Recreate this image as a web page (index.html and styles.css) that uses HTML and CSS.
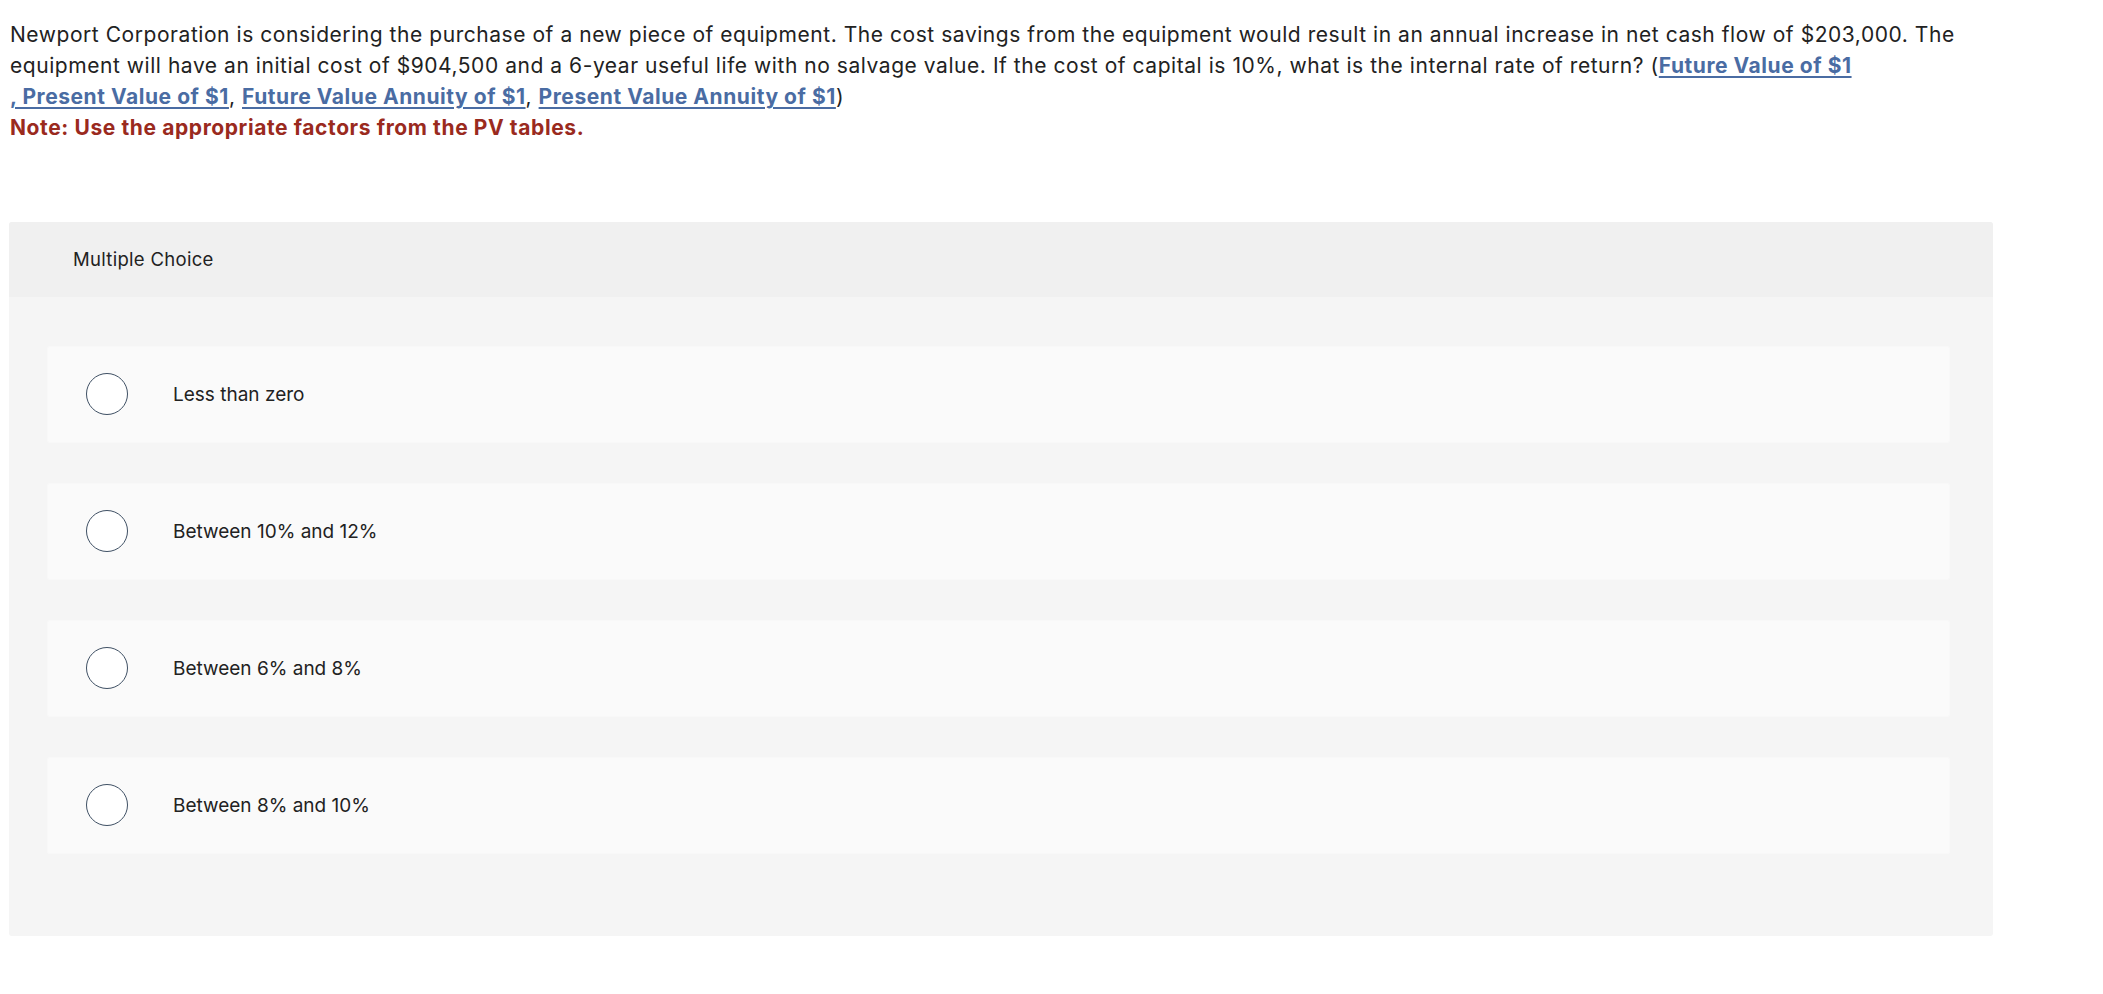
FILE: index.html
```html
<!DOCTYPE html>
<html lang="en">
<head>
<meta charset="utf-8">
<title>Multiple Choice</title>
<link rel="stylesheet" href="styles.css">
</head>
<body>
<div class="question">
  <p class="prompt">Newport Corporation is considering the purchase of a new piece of equipment. The cost savings from the equipment would result in an annual increase in net cash flow of $203,000. The<br>equipment will have an initial cost of $904,500 and a 6-year useful life with no salvage value. If the cost of capital is 10%, what is the internal rate of return? (<a class="ref" href="#">Future Value of $1</a><br><a class="ref" href="#">, Present Value of $1</a>, <a class="ref" href="#">Future Value Annuity of $1</a>, <a class="ref" href="#">Present Value Annuity of $1</a>)</p>
  <p class="note">Note: Use the appropriate factors from the PV tables.</p>
</div>
<section class="panel">
  <header class="panel-head">Multiple Choice</header>
  <div class="panel-body">
    <label class="choice"><span class="radio"></span><span class="choice-text">Less than zero</span></label>
    <label class="choice"><span class="radio"></span><span class="choice-text">Between 10% and 12%</span></label>
    <label class="choice"><span class="radio"></span><span class="choice-text">Between 6% and 8%</span></label>
    <label class="choice"><span class="radio"></span><span class="choice-text">Between 8% and 10%</span></label>
  </div>
</section>
</body>
</html>
```

FILE: styles.css
```css
html, body {
  background: #ffffff;
}
body {
  margin: 8px;
  font-family: Inter, "Open Sans", Arial, sans-serif;
  color: #222222;
}
.question {
  padding-top: 10.5px;
}
.prompt {
  margin: 0;
  padding-left: 2px;
  font-size: 21px;
  line-height: 31.3px;
  letter-spacing: 0.55px;
  white-space: nowrap;
}
.ref {
  color: #4a6ca3;
  font-weight: 700;
  text-decoration: underline;
  text-decoration-thickness: 2px;
  text-underline-offset: 3px;
}
.note {
  margin: 0;
  padding-left: 2px;
  font-size: 21px;
  line-height: 31.3px;
  letter-spacing: 0.6px;
  font-weight: 700;
  color: #9a2a1e;
}
.panel {
  margin: 78px 0 0 1px;
  width: 1984px;
  background: #f5f5f5;
  border-radius: 3px;
  overflow: hidden;
}
.panel-head {
  height: 75px;
  display: flex;
  align-items: center;
  padding-left: 64px;
  background: #f0f0f0;
  font-size: 18.5px;
  letter-spacing: 0.3px;
  color: #222222;
}
.panel-body {
  padding: 49px 43px 82px 38px;
  display: flex;
  flex-direction: column;
  gap: 40px;
}
.choice {
  height: 97px;
  box-sizing: border-box;
  display: flex;
  align-items: center;
  gap: 45px;
  padding-left: 38px;
  background: #fafafa;
  border: 1px solid #f8f8f8;
  border-radius: 2px;
  cursor: pointer;
}
.radio {
  width: 42px;
  height: 42px;
  box-sizing: border-box;
  border: 1.5px solid #3f5064;
  border-radius: 50%;
  background: #ffffff;
  flex: none;
}
.choice-text {
  font-size: 19px;
  color: #222222;
}
```
